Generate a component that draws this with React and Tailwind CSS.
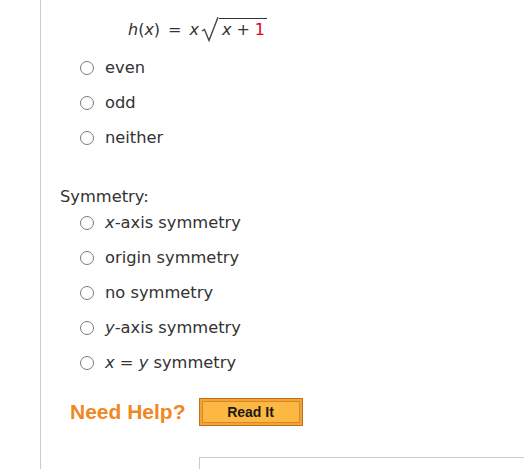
const font = { fontFamily: '"DejaVu Sans", Verdana, sans-serif' };

function Radio({ children }) {
  return (
    <label className="flex h-[35px] items-center text-[16.3px] leading-[20px] text-[#333]">
      <span className="ml-[39px] mr-[11px] h-[14px] w-[14px] shrink-0 rounded-full border-[1.5px] border-[#7b7b7b] bg-white" />
      <span>{children}</span>
    </label>
  );
}

function Formula() {
  return (
    <div className="flex h-[50px] items-start pl-[87px] pt-[16px] text-[16px] text-[#333]">
      <div className="flex items-end">
        <span className="pb-[2px] leading-[20px]">
          <i>h</i>(<i>x</i>)<span className="mx-[8px]">=</span><i>x</i>
        </span>
        <svg width="18" height="26" viewBox="0 0 18 26" className="ml-[2px]">
          <path d="M1 15 L3.5 13.5 L8 24.5 L17 1.2" fill="none" stroke="#444" strokeWidth="1.4" strokeLinejoin="miter" />
        </svg>
        <span className="border-t-[1.4px] border-[#333] pb-[2px] pl-[3px] pr-[2px] pt-[1px] leading-[20px]">
          <i>x</i>
          <span className="mx-[5px]">+</span>
          <span className="text-[#e0002a]">1</span>
        </span>
      </div>
    </div>
  );
}

export default function App() {
  return (
    <div className="relative h-[469px] w-[524px] overflow-hidden bg-white" style={font}>
      <div className="ml-[40px] h-full border-l border-[#cccccc]">
        <Formula />
        <Radio>even</Radio>
        <Radio>odd</Radio>
        <Radio>neither</Radio>

        <div className="ml-[19px] mt-[33px] h-[17px] text-[16.3px] leading-[17px] text-[#333]">Symmetry:</div>
        <Radio><i>x</i>-axis symmetry</Radio>
        <Radio>origin symmetry</Radio>
        <Radio>no symmetry</Radio>
        <Radio><i>y</i>-axis symmetry</Radio>
        <Radio><i>x</i> = <i>y</i> symmetry</Radio>

        <div className="ml-[29px] mt-[18px] flex h-[28px] items-center" style={{ fontFamily: '"Liberation Sans", Arial, sans-serif' }}>
          <span className="text-[21px] font-bold leading-[24px] text-[#f0871f]">Need Help?</span>
          <button className="ml-[13px] h-[28px] w-[104px] border border-[#c0731c] bg-[#f6a232] p-[2px]">
            <span className="flex h-full w-full items-center justify-center border border-[#d48a2a] bg-[#fdb743] text-[14px] font-bold text-[#1a1a1a]">
              Read It
            </span>
          </button>
        </div>

        <div className="ml-[158px] mt-[31px] h-[30px] border-l border-t border-[#cccccc]" />
      </div>
    </div>
  );
}
